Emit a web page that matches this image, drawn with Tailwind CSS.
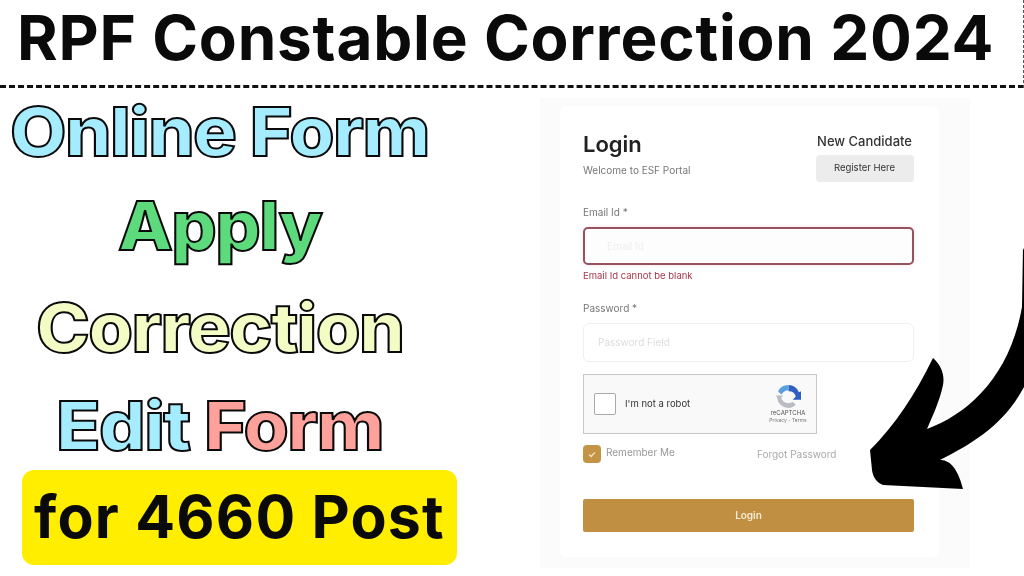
<!DOCTYPE html>
<html><head><meta charset="utf-8"><script src="https://cdn.jsdelivr.net/npm/@tailwindcss/browser@4"></script></head>
<body class="bg-white">
<div class="relative w-[1024px] h-[576px] overflow-hidden bg-white flex flex-col font-['Inter',sans-serif]">
  <header class="h-[88px] shrink-0 border-b-[3px] border-dashed border-[#111] pl-[17px] pt-[5px]">
    <h1 class="text-[62px] leading-[66px] font-bold text-[#0a0a0a] whitespace-nowrap tracking-[0.8px]">RPF Constable Correction 2024</h1>
  </header>
  <div class="absolute right-0 top-0 h-[88px] border-r border-dashed border-[#555]"></div>
  <main class="flex flex-1 min-h-0">
    <section class="w-[540px] shrink-0 flex flex-col font-extrabold text-[68px] leading-none [-webkit-text-stroke:2px_#0a0a0a] tracking-[-1.5px]">
      <div class="h-[97px] pl-[10px] pt-[9px] text-[#a5ecff] whitespace-nowrap"><span class="inline-block origin-left scale-x-[1.077]">Online Form</span></div>
      <div class="h-[99px] pl-[118px] pt-[6px] text-[#5ddb7c]"><span class="inline-block origin-left scale-x-[1.05]">Apply</span></div>
      <div class="h-[104px] pl-[36px] pt-[9px] text-[#f2fcc4]"><span class="inline-block origin-left scale-x-[1.065]">Correction</span></div>
      <div class="h-[70px] pl-[56px] pt-[3px] text-[#a5ecff] whitespace-nowrap"><span class="inline-block origin-left scale-x-[1.077]">Edit <span class="text-[#ffa19b]">Form</span></span></div>
      <div class="ml-[22px] mt-[12px] w-[435px] h-[95px] rounded-[12px] bg-[#ffee00] flex items-center justify-center font-bold text-[59px] tracking-[1.2px] text-[#0a0a0a] [-webkit-text-stroke:0] whitespace-nowrap pb-[3px]">for 4660 Post</div>
    </section>
    <section class="w-[430px] mt-[10px] h-[470px] bg-[#fbfbfb] flex pl-[20px] pt-[8px]">
      <div class="w-[379px] h-[451px] bg-white rounded-[6px] pl-[23px] pr-[25px] pt-[26px] text-[#555] blur-[0.7px]">
        <div class="flex justify-between items-start">
          <div>
            <div class="text-[22px] leading-[24px] font-semibold text-[#222]">Login</div>
            <div class="text-[10px] mt-[7px] text-[#777]">Welcome to ESF Portal</div>
          </div>
          <div class="flex flex-col items-center w-[99px]">
            <div class="text-[13px] font-medium text-[#333] leading-[16px] mt-[1px] whitespace-nowrap">New Candidate</div>
            <div class="w-[98px] h-[27px] mt-[6px] rounded-[4px] bg-[#ececec] text-[9.5px] text-[#333] flex items-center justify-center">Register Here</div>
          </div>
        </div>
        <div class="text-[10px] mt-[23px] leading-[14px] text-[#777]">Email Id *</div>
        <div class="h-[38px] mt-[8px] rounded-[5px] border-2 border-[#94535f] bg-[#fdfdfd] shadow-[0_0_4px_#fbdde3] text-[10px] text-[#eee] pl-[22px] leading-[34px]">Email Id</div>
        <div class="text-[9.5px] leading-[14px] mt-[4px] text-[#a5384c]">Email Id cannot be blank</div>
        <div class="text-[10px] mt-[18px] leading-[14px] text-[#777]">Password *</div>
        <div class="h-[39px] mt-[8px] rounded-[6px] border border-[#efefef] text-[10px] text-[#ddd] pl-[14px] leading-[36px]">Password Field</div>
        <div class="w-[234px] h-[60px] mt-[12px] border border-[#c8c8c8] bg-[#f9f9f9] flex items-center pl-[10px]">
          <div class="w-[22px] h-[22px] border border-[#aaa] bg-white rounded-[2px]"></div>
          <div class="text-[9.5px] text-[#333] ml-[9px]">I'm not a robot</div>
          <div class="ml-auto w-[56px] flex flex-col items-center">
            <svg viewBox="0 0 24 24" class="w-[25px] h-[25px]"><path d="M12 1a11 11 0 0 1 10 7l2-1v8h-8l3-3a7 7 0 0 0-7-5z" fill="#2f5fc0"/><path d="M12 1A11 11 0 0 0 2 7l3 3 2-2a7 7 0 0 1 5-2z" fill="#5a9fe0"/><path d="M1 13a11 11 0 0 0 11 10c3 0 5-1 7-3l-3-3a7 7 0 0 1-11-4l2-2H0z" fill="#b9bcc2"/></svg>
            <div class="text-[6px] leading-[8px] text-[#555]">reCAPTCHA</div>
            <div class="text-[5px] leading-[7px] text-[#777]">Privacy - Terms</div>
          </div>
        </div>
        <div class="flex items-center mt-[10px] h-[20px] relative">
          <div class="w-[18px] h-[18px] rounded-[4px] bg-[#c39445] flex items-center justify-center">
            <svg viewBox="0 0 12 12" class="w-[10px] h-[10px]"><path d="M2.500 6.500 5 9l4.500-5" fill="none" stroke="#f3e4c4" stroke-width="1.600"/></svg>
          </div>
          <div class="text-[10px] ml-[5px] -mt-[3px] text-[#999]">Remember Me</div>
          <div class="text-[10px] ml-[82px] text-[#aaa]">Forgot Password</div>
        </div>
        <div class="h-[33px] mt-[35px] bg-[#c08f41] rounded-[2px] text-[10px] font-semibold text-[#f7ecd9] flex items-center justify-center">Login</div>
      </div>
    </section>
  </main>
  <svg class="absolute left-0 top-0 w-[1024px] h-[576px] pointer-events-none" viewBox="0 0 1024 576"><path d="M1023 248L1024 250V387C1004 424 975 442 940 460C948 460 957 465 963 489L883 485C876 482 873 477 872 470L870 450C895 425 915 395 933 358C941 365 945 375 943 385C940 400 933 415 927 429C970 413 1010 375 1022 307Z" fill="#000"/></svg>
</div>
</body></html>
